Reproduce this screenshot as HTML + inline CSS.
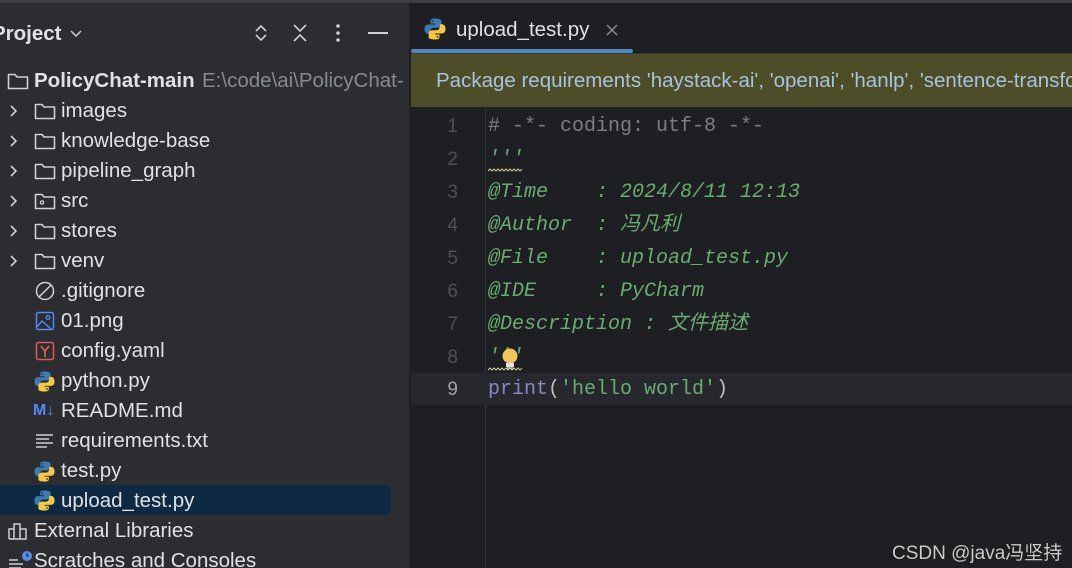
<!DOCTYPE html>
<html style="overflow:hidden;width:1072px;height:568px"><head><meta charset="utf-8"><style>
*{margin:0;padding:0;box-sizing:border-box}
body{width:1072px;height:568px;overflow:hidden;background:#1e1f22;position:relative;font-family:"Liberation Sans","Noto Sans CJK SC",sans-serif}
#side{position:absolute;left:0;top:0;width:410px;height:568px;background:#2b2d30;border-right:1px solid #1e1f22;overflow:hidden}
#topbar{position:absolute;left:0;top:0;width:1072px;height:3px;background:#3c3f41;z-index:5}
.row{position:absolute;height:30px;line-height:30px;font-size:20.5px;color:#dfe1e5;white-space:nowrap}
.row svg{position:absolute}
.chev{position:absolute;left:8px;top:9px}
.ico{position:absolute;left:34px;top:6px}
.t{position:absolute;left:61px;top:0}
#ed{position:absolute;left:411px;top:0;width:661px;height:568px;background:#1e1f22;overflow:hidden}
.code{position:absolute;left:488px;font-family:"Liberation Mono","Noto Sans CJK SC",monospace;font-size:20px;height:33px;line-height:33px;white-space:pre;color:#6aab73;font-style:italic}
.ln{position:absolute;left:428px;width:30px;text-align:right;font-family:"Liberation Sans",sans-serif;font-size:19px;height:33px;line-height:33px;color:#4b5059}
</style></head><body>
<svg width="0" height="0" style="position:absolute">
<defs>
<symbol id="py" viewBox="0 0 24 24">
<path d="M11.8 1.5c-4.5 0-4.3 2-4.3 2v3h4.4v1H5.6S1.5 7 1.5 12s3.6 4.8 3.6 4.8h2.1v-2.4s-.1-3.6 3.5-3.6h4.3s3.4.1 3.4-3.3V3.9S18.9 1.5 11.8 1.5z" fill="#3d7ab5"/>
<circle cx="9.4" cy="4.2" r="0.9" fill="#2b2d30"/>
<path d="M12.2 22.5c4.5 0 4.3-2 4.3-2v-3h-4.4v-1h6.3s4.1.5 4.1-4.5-3.6-4.8-3.6-4.8h-2.1v2.4s.1 3.6-3.5 3.6H9s-3.4-.1-3.4 3.3v3.6s-.5 2.4 6.6 2.4z" fill="#f5c842"/>
<circle cx="14.6" cy="19.8" r="0.9" fill="#2b2d30"/>
</symbol>
<symbol id="fold" viewBox="0 0 22 18"><path d="M1.5 2.5h6.5l2 2.5h10.5v11.5h-19z" fill="none" stroke="#ced0d6" stroke-width="1.6" stroke-linejoin="round"/></symbol>
<symbol id="chev" viewBox="0 0 12 12"><path d="M3 1l5 5-5 5" fill="none" stroke="#ced0d6" stroke-width="1.6"/></symbol>
</defs></svg>
<div id="topbar"></div>
<div id="side">
<div class="row" style="left:-8px;top:19px;font-weight:bold;color:#dfe1e5">Project</div>
<svg style="position:absolute;left:70px;top:30px" width="12" height="8"><path d="M1 1l5 5 5-5" fill="none" stroke="#ced0d6" stroke-width="1.5"/></svg>
<svg style="position:absolute;left:253px;top:23px" width="16" height="20" viewBox="0 0 16 20"><path d="M3 8l5-5 5 5M3 12l5 5 5-5" fill="none" stroke="#ced0d6" stroke-width="1.6"/></svg>
<svg style="position:absolute;left:292px;top:23px" width="16" height="20" viewBox="0 0 16 20"><path d="M2 2l6 6 6-6M2 18l6-6 6 6" fill="none" stroke="#ced0d6" stroke-width="1.6"/></svg>
<svg style="position:absolute;left:334px;top:23px" width="8" height="20"><circle cx="4" cy="3" r="1.8" fill="#ced0d6"/><circle cx="4" cy="10" r="1.8" fill="#ced0d6"/><circle cx="4" cy="17" r="1.8" fill="#ced0d6"/></svg>
<div style="position:absolute;left:368px;top:32px;width:20px;height:2px;background:#ced0d6"></div>

<div class="row" style="left:0;top:66px;width:410px"><svg style="left:7px;top:6px" width="22" height="18"><use href="#fold"/></svg><span style="position:absolute;left:34px;font-weight:bold">PolicyChat-main</span><span style="position:absolute;left:202px;color:#868a91">E:\code\ai\PolicyChat-</span></div>

<div class="row" style="left:0;top:96px;width:410px"><svg class="chev" width="12" height="12"><use href="#chev"/></svg><svg class="ico" width="22" height="18"><use href="#fold"/></svg><span class="t">images</span></div>
<div class="row" style="left:0;top:126px;width:410px"><svg class="chev" width="12" height="12"><use href="#chev"/></svg><svg class="ico" width="22" height="18"><use href="#fold"/></svg><span class="t">knowledge-base</span></div>
<div class="row" style="left:0;top:156px;width:410px"><svg class="chev" width="12" height="12"><use href="#chev"/></svg><svg class="ico" width="22" height="18"><use href="#fold"/></svg><span class="t">pipeline_graph</span></div>
<div class="row" style="left:0;top:186px;width:410px"><svg class="chev" width="12" height="12"><use href="#chev"/></svg><svg class="ico" width="22" height="18"><use href="#fold"/><circle cx="8" cy="10.5" r="1.6" fill="none" stroke="#ced0d6" stroke-width="1.3"/></svg><span class="t">src</span></div>
<div class="row" style="left:0;top:216px;width:410px"><svg class="chev" width="12" height="12"><use href="#chev"/></svg><svg class="ico" width="22" height="18"><use href="#fold"/></svg><span class="t">stores</span></div>
<div class="row" style="left:0;top:246px;width:410px"><svg class="chev" width="12" height="12"><use href="#chev"/></svg><svg class="ico" width="22" height="18"><use href="#fold"/></svg><span class="t">venv</span></div>

<div class="row" style="left:0;top:276px;width:410px"><svg style="left:35px;top:5px" width="20" height="20"><circle cx="10" cy="10" r="8.5" fill="none" stroke="#ced0d6" stroke-width="1.5"/><path d="M4 16L16 4" stroke="#ced0d6" stroke-width="1.5"/></svg><span class="t">.gitignore</span></div>
<div class="row" style="left:0;top:306px;width:410px"><svg style="left:35px;top:5px" width="20" height="20"><rect x="1.5" y="1.5" width="17" height="17" rx="2" fill="none" stroke="#548af7" stroke-width="1.5"/><circle cx="13" cy="6.5" r="1.8" fill="none" stroke="#548af7" stroke-width="1.3"/><path d="M2 16l5-6 9 8" fill="none" stroke="#548af7" stroke-width="1.4"/></svg><span class="t">01.png</span></div>
<div class="row" style="left:0;top:336px;width:410px"><svg style="left:35px;top:5px" width="20" height="20"><rect x="1.5" y="1.5" width="17" height="17" rx="2" fill="none" stroke="#db5c5c" stroke-width="1.5"/><path d="M6 5l4 5 4-5M10 10v6" fill="none" stroke="#db5c5c" stroke-width="1.8"/></svg><span class="t">config.yaml</span></div>
<div class="row" style="left:0;top:366px;width:410px"><svg style="left:33px;top:4px" width="23" height="23"><use href="#py"/></svg><span class="t">python.py</span></div>
<div class="row" style="left:0;top:396px;width:410px"><span style="position:absolute;left:33px;font-weight:bold;font-size:16px;color:#548af7">M&#8595;</span><span class="t">README.md</span></div>
<div class="row" style="left:0;top:426px;width:410px"><svg style="left:35px;top:7px" width="20" height="16"><path d="M1 2h17M1 6h13M1 10h17M1 14h11" stroke="#ced0d6" stroke-width="1.5"/></svg><span class="t">requirements.txt</span></div>
<div class="row" style="left:0;top:456px;width:410px"><svg style="left:33px;top:4px" width="23" height="23"><use href="#py"/></svg><span class="t">test.py</span></div>
<div style="position:absolute;left:0;top:485px;width:391px;height:30px;background:#0e2a42;border-radius:0 5px 5px 0"></div>
<div class="row" style="left:0;top:486px;width:410px"><svg style="left:33px;top:3px" width="23" height="23"><use href="#py"/></svg><span class="t">upload_test.py</span></div>
<div class="row" style="left:0;top:516px;width:410px"><svg style="left:8px;top:6px" width="20" height="18"><path d="M1 17V7h5v10M6 17V2h6v15M12 17V7h6v10H1" fill="none" stroke="#ced0d6" stroke-width="1.5"/></svg><span style="position:absolute;left:34px">External Libraries</span></div>
<div class="row" style="left:0;top:546px;width:410px"><svg style="left:8px;top:4px" width="24" height="22"><path d="M1 10h9M1 14h14M1 18h12M1 22h14" stroke="#ced0d6" stroke-width="1.5"/><circle cx="19" cy="6" r="5" fill="#548af7"/><path d="M19 3v3h2" stroke="#2b2d30" stroke-width="1.2" fill="none"/></svg><span style="position:absolute;left:34px">Scratches and Consoles</span></div>
</div>

<div id="ed">
<div style="position:absolute;left:0;top:53px;width:661px;height:54px;background:#4d4d27;border-top:1px solid #3a3a2a;overflow:hidden">
<div style="position:absolute;left:25px;top:14px;font-size:20.5px;color:#a8c2e0;white-space:nowrap;line-height:26px">Package requirements 'haystack-ai', 'openai', 'hanlp', 'sentence-transformers'</div>
</div>
</div>
<svg style="position:absolute;left:423px;top:17px" width="24" height="24"><use href="#py"/></svg>
<div style="position:absolute;left:456px;top:17px;font-size:20.5px;color:#dfe1e5;line-height:26px">upload_test.py</div>
<svg style="position:absolute;left:606px;top:24px" width="12" height="12"><path d="M1 1l10 10M11 1L1 11" stroke="#868a91" stroke-width="1.5"/></svg>
<div style="position:absolute;left:411px;top:49px;width:222px;height:4px;background:#4a88c7;border-radius:2px"></div>
<div style="position:absolute;left:485px;top:107px;width:1px;height:461px;background:#313338"></div>
<div style="position:absolute;left:411px;top:373px;width:661px;height:32px;background:#26282e"></div>

<div class="ln" style="top:110px">1</div>
<div class="ln" style="top:143px">2</div>
<div class="ln" style="top:176px">3</div>
<div class="ln" style="top:209px">4</div>
<div class="ln" style="top:242px">5</div>
<div class="ln" style="top:275px">6</div>
<div class="ln" style="top:308px">7</div>
<div class="ln" style="top:341px">8</div>
<div class="ln" style="top:373px;color:#a1a3ab">9</div>

<div class="code" style="top:110px;color:#7a7e85;font-style:normal"># -*- coding: utf-8 -*-</div>
<div class="code" style="top:143px">'''</div>
<div class="code" style="top:176px">@Time    : 2024/8/11 12:13</div>
<div class="code" style="top:209px">@Author  : 冯凡利</div>
<div class="code" style="top:242px">@File    : upload_test.py</div>
<div class="code" style="top:275px">@IDE     : PyCharm</div>
<div class="code" style="top:308px">@Description : 文件描述</div>
<div class="code" style="top:341px">'''</div>
<svg style="position:absolute;left:499px;top:347px" width="22" height="24"><circle cx="11" cy="9" r="7.5" fill="#f2c55c"/><rect x="7" y="16" width="8" height="4" fill="#dfe1e5"/><rect x="8" y="20" width="6" height="2" fill="#a1a3ab"/></svg>
<svg style="position:absolute;left:488px;top:167px" width="36" height="6"><path d="M0 4l2-2 2 2 2-2 2 2 2-2 2 2 2-2 2 2 2-2 2 2 2-2 2 2 2-2 2 2 2-2 2 2 2-2" fill="none" stroke="#c9c79a" stroke-width="1"/></svg>
<svg style="position:absolute;left:488px;top:366px" width="36" height="6"><path d="M0 4l2-2 2 2 2-2 2 2 2-2 2 2 2-2 2 2 2-2 2 2 2-2 2 2 2-2 2 2 2-2 2 2 2-2" fill="none" stroke="#c9c79a" stroke-width="1"/></svg>
<div class="code" style="top:373px;font-style:normal;color:#bcbec4"><span style="color:#8888c6">print</span>(<span style="color:#6aab73">'hello world'</span>)</div>

<div style="position:absolute;left:892px;top:538px;font-size:19px;color:#c9c9c9;white-space:nowrap">CSDN @java冯坚持</div>
</body></html>
